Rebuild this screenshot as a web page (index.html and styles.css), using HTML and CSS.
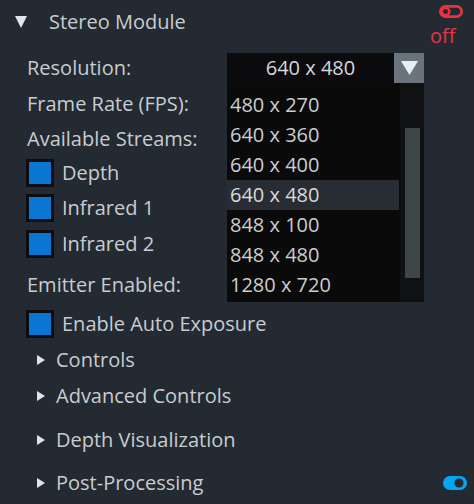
FILE: index.html
```html
<!DOCTYPE html>
<html>
<head>
<meta charset="utf-8">
<link rel="stylesheet" href="styles.css">
</head>
<body>
<div class="panel">
  <div class="header">
    <svg class="tri-down" width="12" height="12" viewBox="0 0 12 12"><polygon points="0,0 12,0 6,12" fill="#dfe5ef"/></svg>
    <span class="title">Stereo Module</span>
    <div class="power">
      <svg class="toggle-off" width="24" height="13" viewBox="0 0 24 13">
        <rect x="1.4" y="1.4" width="21.2" height="10.2" rx="5.1" fill="none" stroke="#e8343e" stroke-width="2.8"/>
        <circle cx="6.5" cy="6.5" r="3.8" fill="none" stroke="#e8343e" stroke-width="2.6"/>
      </svg>
      <span class="off">off</span>
    </div>
  </div>

  <div class="row r-res">
    <span class="label">Resolution:</span>
    <div class="combo">
      <div class="combo-value">640 x 480</div>
      <div class="combo-btn">
        <svg width="17" height="14" viewBox="0 0 17 14"><polygon points="0,0 17,0 8.5,14" fill="#e9eef4"/></svg>
      </div>
      <div class="popup">
        <div class="items">
          <div class="item">480 x 270</div>
          <div class="item">640 x 360</div>
          <div class="item">640 x 400</div>
          <div class="item selected">640 x 480</div>
          <div class="item">848 x 100</div>
          <div class="item">848 x 480</div>
          <div class="item">1280 x 720</div>
        </div>
        <div class="scroll"><div class="thumb"></div></div>
      </div>
    </div>
  </div>

  <div class="row r-fps"><span class="label">Frame Rate (FPS):</span></div>
  <div class="row r-avail"><span class="label">Available Streams:</span></div>
  <div class="row r-depth"><span class="check"></span><span class="label">Depth</span></div>
  <div class="row r-ir1"><span class="check"></span><span class="label">Infrared 1</span></div>
  <div class="row r-ir2"><span class="check"></span><span class="label">Infrared 2</span></div>
  <div class="row r-emit"><span class="label">Emitter Enabled:</span></div>
  <div class="row r-auto"><span class="check"></span><span class="label">Enable Auto Exposure</span></div>

  <div class="sub r-ctrl">
    <svg class="tri-right" width="8" height="10" viewBox="0 0 8 10"><polygon points="0,0 8,5 0,10" fill="#dfe5ef"/></svg>
    <span class="label">Controls</span>
  </div>
  <div class="sub r-adv">
    <svg class="tri-right" width="8" height="10" viewBox="0 0 8 10"><polygon points="0,0 8,5 0,10" fill="#dfe5ef"/></svg>
    <span class="label">Advanced Controls</span>
  </div>
  <div class="sub r-vis">
    <svg class="tri-right" width="8" height="10" viewBox="0 0 8 10"><polygon points="0,0 8,5 0,10" fill="#dfe5ef"/></svg>
    <span class="label">Depth Visualization</span>
  </div>
  <div class="sub r-post">
    <svg class="tri-right" width="8" height="10" viewBox="0 0 8 10"><polygon points="0,0 8,5 0,10" fill="#dfe5ef"/></svg>
    <span class="label">Post-Processing</span>
    <svg class="toggle-on" width="24" height="14" viewBox="0 0 24 14">
      <rect x="0" y="0" width="24" height="14" rx="7" fill="#06a6f5"/>
      <circle cx="16" cy="7" r="4.6" fill="#232a31"/>
    </svg>
  </div>
</div>
</body>
</html>
```

FILE: styles.css
```css
html, body {
  margin: 0;
  padding: 0;
  background: #232a31;
}
body {
  width: 474px;
  height: 504px;
  overflow: hidden;
  font-family: "Open Sans", "Noto Sans", sans-serif;
  font-size: 20px;
  color: #c8ccd2;
}
.panel {
  display: flex;
  flex-direction: column;
}
.header {
  height: 44px;
  display: flex;
  align-items: center;
  padding-left: 15px;
}
.tri-down { display: block; }
.title {
  margin-left: 22px;
  line-height: 1;
}
.power {
  margin-left: auto;
  align-self: flex-start;
  width: 44px;
  display: flex;
  flex-direction: column;
  align-items: flex-start;
}
.toggle-off {
  display: block;
  margin-top: 5px;
  margin-left: 9px;
}
.off {
  color: #e8343e;
  line-height: 1;
  margin-top: 8px;
}
.row {
  display: flex;
  align-items: center;
  padding-left: 27px;
  line-height: 1;
}
.row .label { white-space: nowrap; }
.r-res { margin-top: 9px; height: 30px; }
.r-res .label { width: 200px; }
.r-fps { margin-top: 3px; height: 36px; }
.r-avail { height: 34px; }
.r-depth { height: 34px; padding-left: 26px; }
.r-ir1 { height: 36px; padding-left: 26px; }
.r-ir2 { height: 36px; padding-left: 26px; }
.r-emit { height: 46px; }
.r-auto { height: 32px; padding-left: 26px; }

.check {
  width: 22px;
  height: 22px;
  border: 3px solid #0c0d10;
  background: #0b76d2;
  margin-right: 8px;
  flex: none;
}

.combo {
  position: relative;
  width: 197px;
  height: 30px;
  display: flex;
  background: #0b0b0d;
}
.combo-value {
  flex: 1;
  display: flex;
  align-items: center;
  justify-content: center;
  color: #d6d8da;
}
.combo-btn {
  width: 30px;
  height: 30px;
  background: #69747f;
  display: flex;
  align-items: center;
  justify-content: center;
}
.combo-btn svg { display: block; }
.popup {
  position: absolute;
  top: 30px;
  left: 0;
  width: 197px;
  height: 219px;
  background: #0a0a0b;
  z-index: 5;
}
.items {
  padding-top: 7px;
  width: 172px;
}
.item {
  height: 30px;
  display: flex;
  align-items: center;
  padding-left: 3px;
  color: #cbcdcf;
}
.item.selected { background: #272d33; color: #d8dadc; }
.scroll {
  position: absolute;
  top: 0;
  right: 0;
  width: 24px;
  height: 219px;
  background: #0f1113;
}
.thumb {
  position: absolute;
  top: 45px;
  left: 5px;
  width: 15px;
  height: 150px;
  background: #3e4745;
}

.sub {
  display: flex;
  align-items: center;
  padding-left: 37px;
  line-height: 1;
}
.tri-right { display: block; margin-right: 11px; flex: none; }
.r-ctrl { height: 40px; }
.r-adv { height: 32px; }
.r-vis { height: 56px; }
.r-post { height: 30px; }
.toggle-on {
  display: block;
  margin-left: auto;
  margin-right: 7px;
}
```
